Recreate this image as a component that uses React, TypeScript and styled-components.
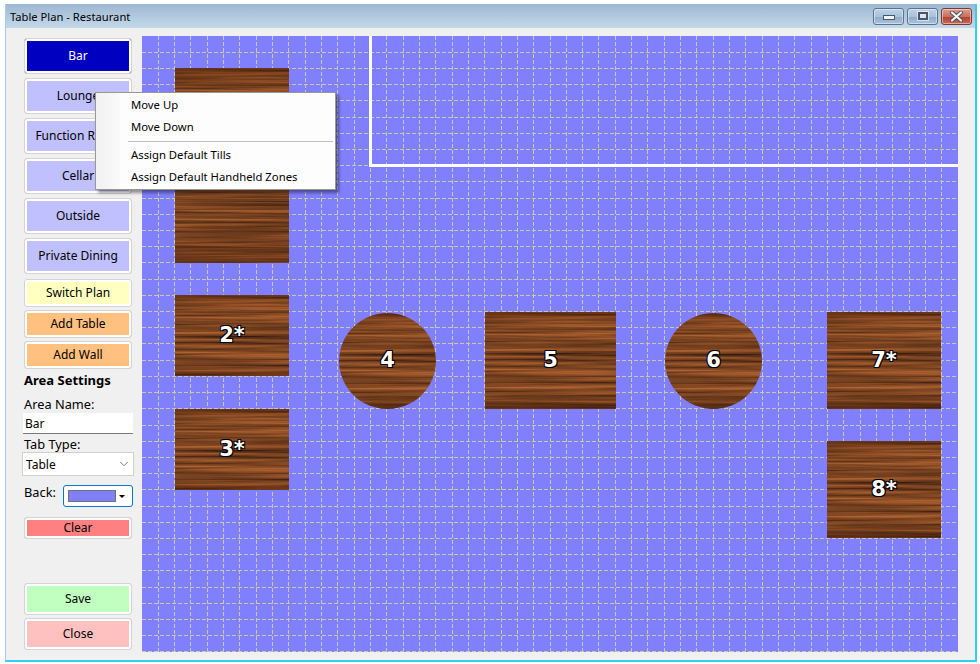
import React from "react";
import styled, { createGlobalStyle } from "styled-components";
import { ChevronDown } from "lucide-react";

const areas = ["Bar", "Lounge", "Function Room", "Cellar", "Outside", "Private Dining"];

const tables = [
  { id: "", x: 33, y: 32, w: 114, h: 195 },
  { id: "2*", x: 33, y: 259, w: 114, h: 81 },
  { id: "3*", x: 33, y: 373, w: 114, h: 81 },
  { id: "4", x: 197, y: 277, w: 97, h: 96, round: true },
  { id: "5", x: 343, y: 276, w: 131, h: 97 },
  { id: "6", x: 523, y: 277, w: 97, h: 96, round: true },
  { id: "7*", x: 685, y: 276, w: 114, h: 97 },
  { id: "8*", x: 685, y: 405, w: 114, h: 97 },
];

const columns = Array.from({ length: 50 }, (_, i) => Math.floor((i + 1) * 16.32) + 0.5);
const rows = Array.from({ length: 38 }, (_, i) => Math.floor((i + 1) * 16.21) + 0.5);

export default function App() {
  return (
    <Page>
      <GlobalStyle />
      <Window>
        <TitleBar>
          <Title>Table Plan - Restaurant</Title>
          <CaptionButtons>
            <CaptionButton aria-label="Minimize">
              <MinimizeGlyph />
            </CaptionButton>
            <CaptionButton aria-label="Maximize">
              <MaximizeGlyph />
            </CaptionButton>
            <CloseButton aria-label="Close window">
              <svg width="15" height="11" viewBox="0 0 15 11">
                <path
                  d="M3 1.5 L12 9.5 M12 1.5 L3 9.5"
                  stroke="#4a4f5c"
                  strokeWidth="4"
                  strokeLinecap="round"
                />
                <path
                  d="M3 1.5 L12 9.5 M12 1.5 L3 9.5"
                  stroke="#f4f4f4"
                  strokeWidth="2.2"
                  strokeLinecap="round"
                />
              </svg>
            </CloseButton>
          </CaptionButtons>
        </TitleBar>
        <Body>
          <Sidebar>
            <ButtonGroup $gap={4}>
              {areas.map((area, i) => (
                <PlanButton
                  key={area}
                  $height={36}
                  $fill={i === 0 ? "#0000c0" : "#c0c0ff"}
                  $color={i === 0 ? "#ffffff" : "#000000"}
                >
                  {area}
                </PlanButton>
              ))}
            </ButtonGroup>
            <ActionGroup $gap={3}>
              <PlanButton $height={28} $fill="#ffffc0">
                Switch Plan
              </PlanButton>
              <PlanButton $height={28} $fill="#ffc080">
                Add Table
              </PlanButton>
              <PlanButton $height={28} $fill="#ffc080">
                Add Wall
              </PlanButton>
            </ActionGroup>
            <Heading>Area Settings</Heading>
            <FieldLabel $top={8}>Area Name:</FieldLabel>
            <NameInput value="Bar" readOnly />
            <FieldLabel $top={2}>Tab Type:</FieldLabel>
            <SelectBox>
              Table
              <ChevronDown size={14} strokeWidth={1.2} color="#444" />
            </SelectBox>
            <BackRow>
              <BackLabel>Back:</BackLabel>
              <ColourPicker>
                <Swatch />
                <Caret />
              </ColourPicker>
            </BackRow>
            <ClearSlot>
              <PlanButton $height={22} $fill="#ff8080">
                Clear
              </PlanButton>
            </ClearSlot>
            <Footer $gap={3}>
              <PlanButton $height={32} $fill="#c0ffc0">
                Save
              </PlanButton>
              <PlanButton $height={32} $fill="#ffc0c0">
                Close
              </PlanButton>
            </Footer>
          </Sidebar>
          <Canvas>
            <GridLines width="816" height="616">
              <defs>
                <filter id="wood" x="0" y="0" width="100%" height="100%" colorInterpolationFilters="sRGB">
                  <feTurbulence type="fractalNoise" baseFrequency="0.005 0.32" numOctaves="4" seed="7" />
                  <feColorMatrix
                    type="matrix"
                    values="0.72 0 0 0 0.13  0.42 0 0 0 0.06  0.2 0 0 0 0.03  0 0 0 0 1"
                  />
                </filter>
              </defs>
              {columns.map((x) => (
                <GridLine key={x} x1={x} x2={x} y1={0} y2={616} />
              ))}
              {rows.map((y) => (
                <GridLine key={y} x1={0} x2={816} y1={y} y2={y} />
              ))}
            </GridLines>
            <VerticalWall />
            <HorizontalWall />
            {tables.map((t) => (
              <Table key={t.y + t.x} $x={t.x} $y={t.y} $w={t.w} $h={t.h} $round={t.round}>
                <WoodSvg width={t.w} height={t.h}>
                  <rect width={t.w} height={t.h} filter="url(#wood)" />
                </WoodSvg>
                {t.id && <TableLabel>{t.id}</TableLabel>}
              </Table>
            ))}
          </Canvas>
        </Body>
        <ContextMenu>
          <MenuItem>Move Up</MenuItem>
          <MenuItem>Move Down</MenuItem>
          <MenuSeparator />
          <MenuItem>Assign Default Tills</MenuItem>
          <MenuItem>Assign Default Handheld Zones</MenuItem>
        </ContextMenu>
      </Window>
    </Page>
  );
}

const GlobalStyle = createGlobalStyle`
  html, body {
    margin: 0;
    padding: 0;
    background: #ffffff;
    font-family: "Noto Sans", "Open Sans", sans-serif;
    font-size: 12px;
    color: #000000;
  }
`;

const Page = styled.div`
  width: 980px;
  height: 664px;
  padding: 4px 3px 2px 5px;
  box-sizing: border-box;
  overflow: hidden;
`;

const Window = styled.div`
  position: relative;
  display: flex;
  flex-direction: column;
  height: 100%;
  box-sizing: border-box;
  background: #f0f0f0;
  border-left: 1px solid #a5cde6;
  border-right: 2px solid #34cfee;
  border-bottom: 2px solid #34cfee;
`;

const TitleBar = styled.div`
  display: flex;
  align-items: center;
  justify-content: space-between;
  flex: none;
  height: 24px;
  padding: 0 3px 0 4px;
  background: linear-gradient(to bottom, #9db8d2, #c4d8ea);
`;

const Title = styled.span`
  font-size: 11.2px;
  color: #000000;
`;

const CaptionButtons = styled.div`
  display: flex;
  gap: 3px;
`;

const CaptionButton = styled.button`
  display: flex;
  align-items: center;
  justify-content: center;
  width: 31px;
  height: 17px;
  padding: 0;
  border: 1px solid #5d7286;
  border-radius: 3px;
  box-shadow: inset 0 0 0 1px rgba(255, 255, 255, 0.45);
  background: linear-gradient(to bottom, #bcd2e6 0%, #a9c3dc 50%, #8dabc7 52%, #a9c4dc 100%);
`;

const CloseButton = styled(CaptionButton)`
  border-color: #7a3a30;
  background: linear-gradient(to bottom, #dc9e90 0%, #c9705f 50%, #b4402e 52%, #c96a58 100%);
`;

const MinimizeGlyph = styled.span`
  display: block;
  width: 10px;
  height: 3px;
  margin-top: 3px;
  border: 1px solid #4a5668;
  background: #f2f5f8;
`;

const MaximizeGlyph = styled.span`
  display: block;
  width: 6px;
  height: 4px;
  border: 2px solid #4a5668;
  outline: 1px solid rgba(255, 255, 255, 0.6);
  background: #dce6f0;
`;

const Body = styled.div`
  display: flex;
  flex: 1;
  gap: 8px;
  padding: 8px 0 8px 16px;
  min-height: 0;
`;

const Sidebar = styled.div`
  display: flex;
  flex-direction: column;
  flex: none;
  width: 112px;
  margin-top: 2px;
  font-size: 12.8px;
`;

const ButtonGroup = styled.div<{ $gap: number }>`
  display: flex;
  flex-direction: column;
  gap: ${({ $gap }) => $gap}px;
  margin: 0 2px;
`;

const ActionGroup = styled(ButtonGroup)`
  margin-top: 5px;
`;

const Footer = styled(ButtonGroup)`
  margin-top: auto;
  margin-bottom: 2px;
`;

const PlanButton = styled.button<{ $height: number; $fill: string; $color?: string }>`
  display: block;
  width: 108px;
  height: ${({ $height }) => $height}px;
  padding: 0 0 2px;
  box-sizing: border-box;
  border: 1px solid #d4d4d4;
  border-radius: 3px;
  outline: none;
  background: ${({ $fill }) => $fill};
  box-shadow: inset 0 0 0 2px #ffffff;
  color: ${({ $color }) => $color ?? "#000000"};
  font-family: inherit;
  font-size: 12px;
`;

const Heading = styled.div`
  margin: 3px 0 0 2px;
  height: 16px;
  line-height: 16px;
  font-size: 13px;
  font-weight: 700;
`;

const FieldLabel = styled.div<{ $top: number }>`
  margin: ${({ $top }) => $top}px 0 0 2px;
  height: 16px;
  line-height: 16px;
`;

const NameInput = styled.input`
  display: block;
  width: 110px;
  height: 21px;
  margin: 1px 1px 0;
  padding: 0 2px;
  box-sizing: border-box;
  border: none;
  border-bottom: 1px solid #7a7a7a;
  outline: none;
  background: #ffffff;
  font-family: inherit;
  font-size: 12px;
`;

const SelectBox = styled.div`
  display: flex;
  align-items: center;
  justify-content: space-between;
  height: 24px;
  padding: 0 2px 0 3px;
  box-sizing: border-box;
  border: 1px solid #d0d0d0;
  background: #ffffff;
  font-size: 12px;
`;

const BackRow = styled.div`
  display: flex;
  align-items: flex-start;
  justify-content: space-between;
  margin: 9px 1px 0 2px;
  height: 22px;
`;

const BackLabel = styled.span`
  line-height: 14px;
`;

const ColourPicker = styled.div`
  display: flex;
  align-items: center;
  gap: 3px;
  width: 70px;
  height: 22px;
  padding-left: 4px;
  box-sizing: border-box;
  border: 1px solid #0078d7;
  border-radius: 3px;
  background: #ffffff;
`;

const Swatch = styled.span`
  width: 48px;
  height: 12px;
  box-sizing: border-box;
  border: 1px solid #707070;
  background: #8080ff;
`;

const Caret = styled.span`
  width: 0;
  height: 0;
  border-left: 3px solid transparent;
  border-right: 3px solid transparent;
  border-top: 3px solid #000000;
`;

const ClearSlot = styled.div`
  margin: 10px 2px 0;
`;

const Canvas = styled.div`
  position: relative;
  flex: none;
  width: 816px;
  height: 616px;
  overflow: hidden;
  background: #8080ff;
`;

const GridLines = styled.svg`
  display: block;
`;

const GridLine = styled.line`
  stroke: #c8c8b4;
  stroke-width: 1;
  stroke-dasharray: 4 2;
`;

const VerticalWall = styled.div`
  position: absolute;
  left: 227px;
  top: 0;
  width: 3px;
  height: 131px;
  background: #ffffff;
`;

const HorizontalWall = styled.div`
  position: absolute;
  left: 227px;
  top: 128px;
  right: 0;
  height: 3px;
  background: #ffffff;
`;

const Table = styled.div<{ $x: number; $y: number; $w: number; $h: number; $round?: boolean }>`
  position: absolute;
  left: ${({ $x }) => $x}px;
  top: ${({ $y }) => $y}px;
  width: ${({ $w }) => $w}px;
  height: ${({ $h }) => $h}px;
  display: flex;
  align-items: center;
  justify-content: center;
  overflow: hidden;
  border-radius: ${({ $round }) => ($round ? "50%" : "0")};

  &::after {
    content: "";
    position: absolute;
    inset: 0;
    background: linear-gradient(
      to bottom,
      rgba(50, 15, 0, 0.35),
      rgba(50, 15, 0, 0) 14%,
      rgba(50, 15, 0, 0) 86%,
      rgba(50, 15, 0, 0.35)
    );
  }
`;

const WoodSvg = styled.svg`
  position: absolute;
  inset: 0;
`;

const TableLabel = styled.span`
  position: relative;
  z-index: 1;
  margin-bottom: 2px;
  color: #ffffff;
  font-family: "DejaVu Sans", sans-serif;
  font-size: 21px;
  font-weight: 700;
  text-shadow: 1px 1px 0 #000, -1px -1px 0 #000, 1px -1px 0 #000, -1px 1px 0 #000;
`;

const ContextMenu = styled.div`
  position: absolute;
  left: 89px;
  top: 88px;
  width: 241px;
  height: 98px;
  padding: 1px 2px;
  box-sizing: border-box;
  border: 1px solid #979797;
  background: linear-gradient(to right, #f1f1f1 0, #fafafa 24px, #fdfdfd 24px);
  box-shadow: 3px 3px 3px rgba(0, 0, 0, 0.4);
  font-size: 11.3px;
`;

const MenuItem = styled.div`
  height: 22px;
  line-height: 22px;
  padding-left: 33px;
  color: #000000;
`;

const MenuSeparator = styled.div`
  height: 1px;
  margin: 3px 0 2px 30px;
  background: #c0c0c0;
`;
